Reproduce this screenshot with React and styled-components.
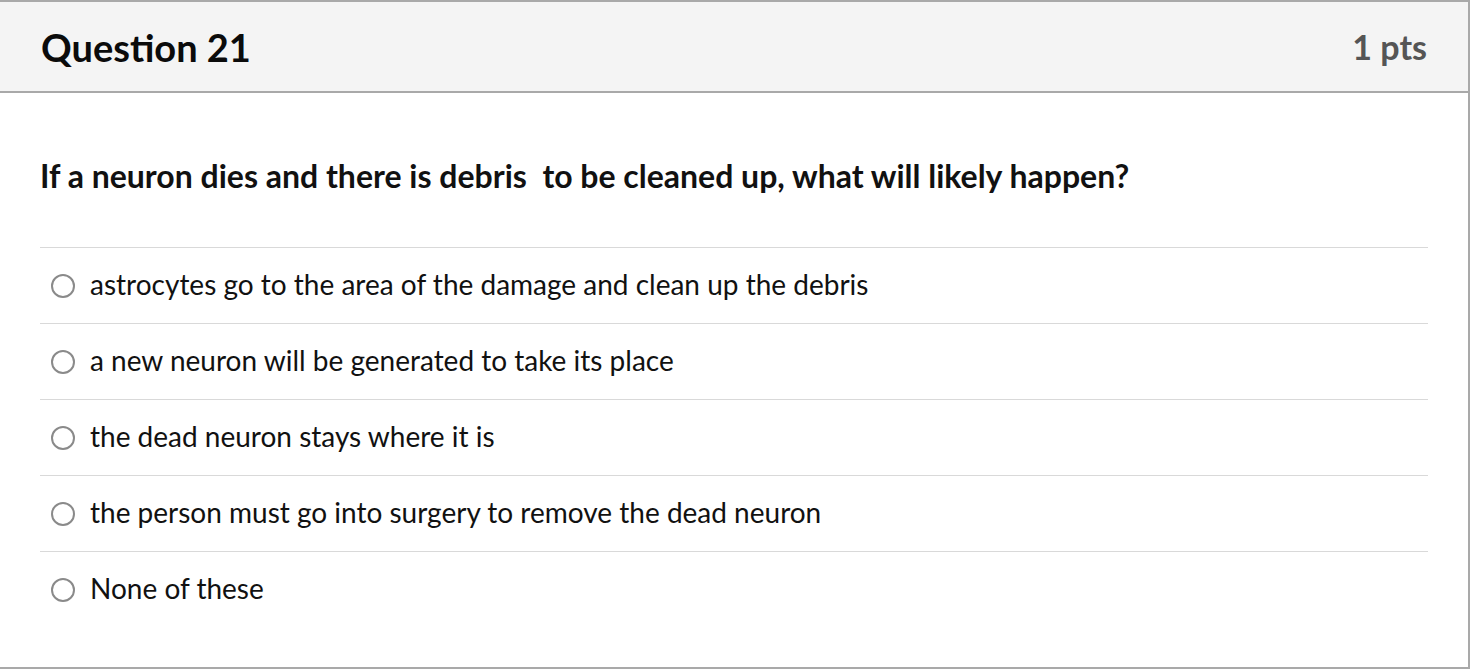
import React from 'react'
import styled, { createGlobalStyle } from 'styled-components'

const Global = createGlobalStyle`
    html, body {
        margin: 0;
        padding: 0;
        background: #fff;
    }
    body {
        font-family: Lato, "Open Sans", sans-serif;
        color: #111;
    }
`

const Panel = styled.div`
    width: 1468px;
    height: 665px;
    border: 2px solid #a9a9a9;
    border-left: none;
    display: flex;
    flex-direction: column;
`

const Header = styled.div`
    height: 89px;
    background: #f4f4f4;
    border-bottom: 2px solid #a9a9a9;
    display: flex;
    justify-content: space-between;
    align-items: center;
    padding: 0 41px 0 41px;
`

const Title = styled.h2`
    margin: 0;
    font-size: 38px;
    font-weight: 700;
    color: #0b0b0b;
`

const Points = styled.div`
    font-size: 34px;
    font-weight: 700;
    color: #555;
`

const Body = styled.div`
    padding: 0 40px 0 40px;
`

const Prompt = styled.p`
    margin: 63px 0 0 0;
    font-size: 32px;
    font-weight: 700;
    line-height: 40px;
    white-space: pre;
    color: #111;
`

const Answers = styled.ul`
    list-style: none;
    margin: 51px 0 0 0;
    padding: 0;
`

const Answer = styled.li`
    height: 75px;
    border-top: 1px solid #d9d9d9;
    display: flex;
    align-items: center;
    gap: 15px;
    padding-left: 11px;
    font-size: 28px;
    color: #111;
`

const Label = styled.span`
    margin-bottom: 4px;
`

const Radio = styled.span`
    width: 20px;
    height: 20px;
    border: 2px solid #8a8a8a;
    border-radius: 50%;
    flex-shrink: 0;
    box-sizing: content-box;
`

const answers = [
    'astrocytes go to the area of the damage and clean up the debris',
    'a new neuron will be generated to take its place',
    'the dead neuron stays where it is',
    'the person must go into surgery to remove the dead neuron',
    'None of these',
]

export default function App() {
    return (
        <>
            <Global />
            <Panel>
                <Header>
                    <Title>Question 21</Title>
                    <Points>1 pts</Points>
                </Header>
                <Body>
                    <Prompt>If a neuron dies and there is debris  to be cleaned up, what will likely happen?</Prompt>
                    <Answers>
                        {answers.map(a => (
                            <Answer key={a}>
                                <Radio />
                                <Label>{a}</Label>
                            </Answer>
                        ))}
                    </Answers>
                </Body>
            </Panel>
        </>
    )
}
